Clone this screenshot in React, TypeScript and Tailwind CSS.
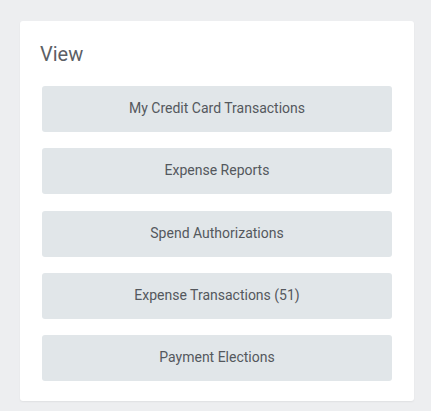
const items = [
  "My Credit Card Transactions",
  "Expense Reports",
  "Spend Authorizations",
  "Expense Transactions (51)",
  "Payment Elections",
];

export default function App() {
  return (
    <main className="min-h-[411px] bg-[#edeef0] pt-[21px] pl-[20px] font-['Roboto',sans-serif]">
      <section className="w-[394px] h-[380px] rounded-[3px] bg-white px-[22px] pt-[20px] shadow-[0_1px_2px_rgba(0,0,0,0.06)]">
        <h2 className="-ml-[2px] text-[20px] leading-[26px] text-[#5c6066]">View</h2>
        <div className="mt-[19px] flex flex-col gap-[16.25px]">
          {items.map((label) => (
            <button
              key={label}
              className="h-[46px] w-[350px] rounded-[3px] bg-[#e1e6e9] pb-[1px] text-[14px] text-[#54585d]"
            >
              {label}
            </button>
          ))}
        </div>
      </section>
    </main>
  );
}
